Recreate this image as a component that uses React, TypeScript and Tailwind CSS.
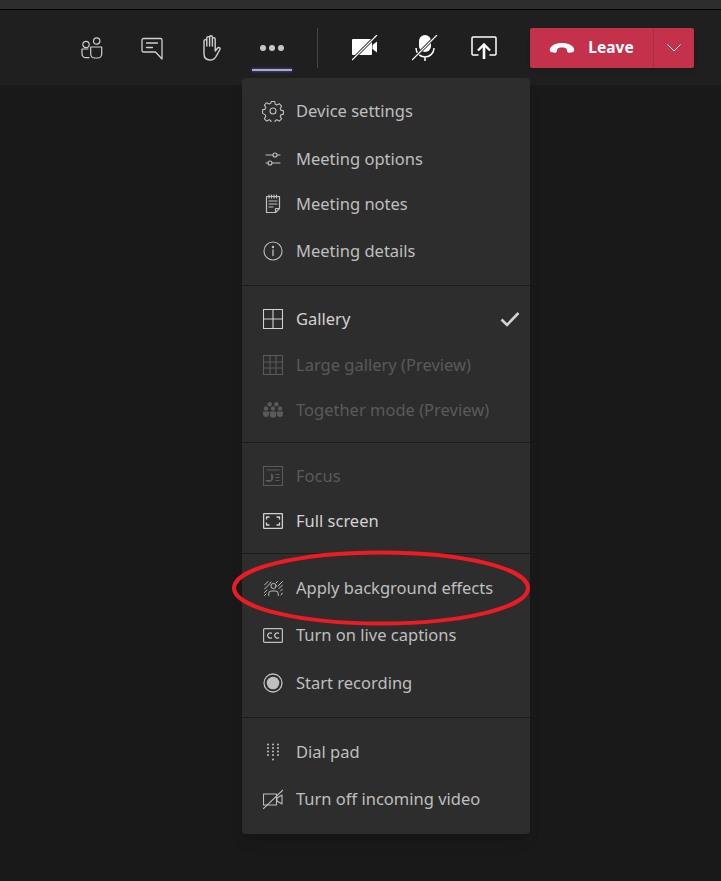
import React from 'react';

const line = { fill: 'none', stroke: 'currentColor', strokeWidth: 1.1, strokeLinecap: 'round', strokeLinejoin: 'round' } as const;

const PeopleIcon = () => (
  <svg width="24" height="24" viewBox="0 0 24 24" {...line} strokeWidth={1.2}>
    <circle cx="6" cy="8.500" r="3.200" />
    <circle cx="16.700" cy="5" r="3.200" />
    <path d="M10.700 11h11v7a4 4 0 0 1-4 4h-3a4 4 0 0 1-4-4z" />
    <path d="M8 13H2v5a3.700 3.700 0 0 0 3.700 3.700H9" />
  </svg>
);

const ChatIcon = () => (
  <svg width="22" height="24" viewBox="0 0 22 24" {...line} strokeWidth={1.3}>
    <path d="M2.500 2.500h17a1.500 1.500 0 0 1 1.500 1.500v19l-6.500-7H2.500A1.500 1.500 0 0 1 1 14.500V4a1.500 1.500 0 0 1 1.500-1.500z" />
    <path d="M5.500 7h11M5.500 11.500h6" />
  </svg>
);

const HandIcon = () => (
  <svg width="22" height="26" viewBox="0 0 22 26" {...line} strokeWidth={1.4}>
    <path d="M3 13V6a1.400 1.400 0 0 1 2.800 0v5V3a1.400 1.400 0 0 1 2.800 0v8V2.200a1.400 1.400 0 0 1 2.800 0V11V4a1.400 1.400 0 0 1 2.800 0V16l2.200-2.800c1.200-1.500 3.400-.2 2.500 1.300l-3.700 6.700C14 23.500 12.500 25 9 25 5 25 3 22.500 3 19z" />
  </svg>
);

const VideoOffIcon = () => (
  <svg width="28" height="26" viewBox="0 0 28 26">
    <path d="M1 4h18a1 1 0 0 1 1 1v14a1 1 0 0 1-1 1H1a1 1 0 0 1-1-1V5a1 1 0 0 1 1-1z" fill="currentColor" />
    <path d="M20.500 10l4.500-3.500v11L20.500 14z" fill="currentColor" />
    <path d="M0 25L25 0" stroke="#1f1f1f" strokeWidth="3" />
    <path d="M0 25L25 0" stroke="currentColor" strokeWidth="1.200" />
  </svg>
);

const MicOffIcon = () => (
  <svg width="26" height="26" viewBox="0 0 26 26" fill="none">
    <rect x="7" y="0" width="12" height="17" rx="6" fill="currentColor" />
    <path d="M4 13a9 9 0 0 0 18 0M13 22v4" stroke="currentColor" strokeWidth="1.500" />
    <path d="M0 25L25 0" stroke="#1f1f1f" strokeWidth="3" />
    <path d="M0 25L25 0" stroke="currentColor" strokeWidth="1.200" />
  </svg>
);

const ShareIcon = () => (
  <svg width="26" height="24" viewBox="0 0 26 24" fill="none" stroke="currentColor" strokeWidth="1.500">
    <path d="M7.500 19H2a1 1 0 0 1-1-1V2a1 1 0 0 1 1-1h22a1 1 0 0 1 1 1v16a1 1 0 0 1-1 1h-5.500" />
    <path d="M13 23V10" strokeWidth="2.600" />
    <path d="M7 14.500L13 8.500l6 6" strokeWidth="2.300" />
  </svg>
);

const HangUpIcon = () => (
  <svg width="26" height="12" viewBox="0 0 26 12" fill="currentColor">
    <path d="M1 6.500C3 2.500 8 1 13 1s10 1.500 12 5.500c.5 1.300.2 3-1 3.600-1.300.6-4 .9-5 .4-1.200-.6-1-3-1.500-3.800C16.800 5.800 15 5.500 13 5.500s-3.800.3-4.500 1.200C8 7.500 8.200 9.900 7 10.500c-1 .5-3.700.2-5-.4-1.200-.6-1.500-2.300-1-3.600z" />
  </svg>
);

const GearIcon = () => (
  <svg width="22" height="22" viewBox="0 0 22 22" {...line}>
    <circle cx="11" cy="11" r="3" />
    <path d="M9.300 1.500h3.400l.6 2.800 1.500.7 2.500-1.300 2.300 2.400-1.400 2.400.6 1.600 2.700.8v3.200l-2.700.8-.6 1.500 1.400 2.400-2.300 2.300-2.500-1.300-1.500.7-.6 2.400H9.300l-.6-2.400-1.500-.7-2.500 1.300-2.300-2.300 1.400-2.400-.6-1.500L.5 13.100V9.900l2.700-.8.600-1.600-1.400-2.400 2.300-2.400 2.500 1.300 1.500-.7z" />
  </svg>
);

const SlidersIcon = () => (
  <svg width="16" height="14" viewBox="0 0 16 14" {...line}>
    <circle cx="10" cy="3" r="2" />
    <circle cx="5" cy="11" r="2" />
    <path d="M1 3h7M12 3h3M1 11h2M7 11h8" />
  </svg>
);

const NotesIcon = () => (
  <svg width="16" height="20" viewBox="0 0 16 20" {...line} strokeWidth={1.2}>
    <path d="M1.500 2.500h13v12l-4 4h-9z" />
    <path d="M10.500 18.500v-4h4M4 1v3M6.500 1v3M9 1v3M11.500 1v3M4 7h8M4 10h8M4 13h4" />
  </svg>
);

const InfoIcon = () => (
  <svg width="20" height="20" viewBox="0 0 20 20" {...line}>
    <circle cx="10" cy="10" r="9" />
    <path d="M10 9v5.500" strokeWidth="1.300" />
    <circle cx="10" cy="6" r=".7" fill="currentColor" />
  </svg>
);

const GalleryIcon = () => (
  <svg width="20" height="20" viewBox="0 0 20 20" {...line} strokeLinecap="butt">
    <rect x=".5" y=".5" width="19" height="19" />
    <path d="M10 1v18M1 10h18" />
  </svg>
);

const LargeGalleryIcon = () => (
  <svg width="20" height="20" viewBox="0 0 20 20" {...line} strokeLinecap="butt">
    <rect x=".5" y=".5" width="19" height="19" />
    <path d="M7 1v18M13 1v18M1 7h18M1 13h18" />
  </svg>
);

const TogetherIcon = () => (
  <svg width="20" height="16" viewBox="0 0 20 16" fill="currentColor">
    <circle cx="6.700" cy="2.200" r="2.200" />
    <circle cx="13.300" cy="2.200" r="2.200" />
    <circle cx="3" cy="6.500" r="2.200" />
    <circle cx="10" cy="6.500" r="2.200" />
    <circle cx="17" cy="6.500" r="2.200" />
    <path d="M0 9.500h6v2.500a3 3 0 0 1-6 0zM6.800 9.500h6.400v3a3.200 3.200 0 0 1-6.400 0zM14 9.500h6v2.500a3 3 0 0 1-6 0z" />
  </svg>
);

const FocusIcon = () => (
  <svg width="20" height="20" viewBox="0 0 20 20" {...line} strokeLinecap="butt">
    <rect x=".5" y=".5" width="19" height="19" />
    <path d="M3.500 4h13M12.500 8.500h4M12.500 11.500h4M12.500 14.500h4" />
    <path d="M8.500 8v6.500H3a3.500 3.500 0 0 0 5.500-6.500z" fill="currentColor" />
  </svg>
);

const FullScreenIcon = () => (
  <svg width="20" height="16" viewBox="0 0 20 16" {...line} strokeLinecap="butt" strokeWidth={1.3}>
    <rect x=".6" y=".6" width="18.800" height="14.800" rx="1" />
    <path d="M6.500 4H3.500v2.500M13.500 4h3v2.500M3.500 9.500V12h3M16.500 9.500V12h-3" />
  </svg>
);

const BackgroundIcon = () => (
  <svg width="19" height="15" viewBox="0 0 19 15" {...line} strokeWidth={1}>
    <circle cx="9.500" cy="5" r="2.600" />
    <path d="M4.800 14.500v-2a2.500 2.500 0 0 1 2.500-2.500h4.400a2.500 2.500 0 0 1 2.500 2.500v2" />
    <path d="M.5 4l3.500-3.500M.5 8L6 2.500M7 1l-1 1M13.500.5L12 2M18.500.5L14 5M18.500 4L15 7.500M.5 11.500L3 9M18.500 8l-2 2M18.500 12l-1.500 2M.5 14.500L2 13" />
  </svg>
);

const CaptionsIcon = () => (
  <svg width="20" height="15" viewBox="0 0 20 15" {...line} strokeLinecap="butt" strokeWidth={1.2}>
    <rect x=".6" y=".6" width="18.800" height="13.800" rx="1" />
    <path d="M9 5.500a2.600 2.600 0 1 0 0 4M16 5.500a2.600 2.600 0 1 0 0 4" />
  </svg>
);

const RecordIcon = () => (
  <svg width="20" height="20" viewBox="0 0 20 20">
    <circle cx="10" cy="10" r="9" fill="none" stroke="currentColor" strokeWidth="1.300" />
    <circle cx="10" cy="10" r="6.300" fill="currentColor" />
  </svg>
);

const DialPadIcon = () => (
  <svg width="14" height="18" viewBox="0 0 14 18" fill="currentColor">
    {[1.500, 5, 8.500, 12].map((y) =>
      [2, 7, 12].map((x) => <circle key={`${x}-${y}`} cx={x} cy={y} r="1" />)
    )}
    <circle cx="7" cy="16.500" r="1" />
  </svg>
);

const IncomingOffIcon = () => (
  <svg width="20" height="20" viewBox="0 0 20 20" {...line} strokeLinecap="butt">
    <path d="M.5 5h13v11H.5zM14 9l5-3v9l-5-3z" />
    <path d="M0 20L20 1" />
  </svg>
);

interface MenuItem {
  label: string;
  icon: React.ReactNode;
  nudge: string;
  tone: string;
  checked?: boolean;
}

const normal = 'text-[#bfbfbf]';
const bright = 'text-[#d2d2d2]';
const muted = 'text-[#5a5a5a]';

const sections: { gap: string; items: MenuItem[] }[] = [
  {
    gap: 'pt-[10px] pb-[11px]',
    items: [
      { label: 'Device settings', icon: <GearIcon />, nudge: 'mt-0', tone: normal },
      { label: 'Meeting options', icon: <SlidersIcon />, nudge: 'mt-[2px]', tone: normal },
      { label: 'Meeting notes', icon: <NotesIcon />, nudge: 'mt-[-1px]', tone: normal },
      { label: 'Meeting details', icon: <InfoIcon />, nudge: 'mt-[1px]', tone: normal },
    ],
  },
  {
    gap: 'pt-[10px] pb-[9px]',
    items: [
      { label: 'Gallery', icon: <GalleryIcon />, nudge: 'mt-0', tone: bright, checked: true },
      { label: 'Large gallery (Preview)', icon: <LargeGalleryIcon />, nudge: 'mt-0', tone: muted },
      { label: 'Together mode (Preview)', icon: <TogetherIcon />, nudge: 'mt-[-1px]', tone: muted },
    ],
  },
  {
    gap: 'pt-[10px] pb-[9px]',
    items: [
      { label: 'Focus', icon: <FocusIcon />, nudge: 'mt-0', tone: muted },
      { label: 'Full screen', icon: <FullScreenIcon />, nudge: 'mt-[-1px]', tone: bright },
    ],
  },
  {
    gap: 'pt-[11px] pb-[11px]',
    items: [
      { label: 'Apply background effects', icon: <BackgroundIcon />, nudge: 'mt-0', tone: normal },
      { label: 'Turn on live captions', icon: <CaptionsIcon />, nudge: 'mt-[1px]', tone: normal },
      { label: 'Start recording', icon: <RecordIcon />, nudge: 'mt-[2px]', tone: normal },
    ],
  },
  {
    gap: 'pt-[11px] pb-[13px]',
    items: [
      { label: 'Dial pad', icon: <DialPadIcon />, nudge: 'mt-0', tone: normal },
      { label: 'Turn off incoming video', icon: <IncomingOffIcon />, nudge: 'mt-[1px]', tone: normal },
    ],
  },
];

const Toolbar: React.FC = () => (
  <div className="h-[75px] bg-[#1f1f1f] flex items-start pl-[62px] pt-[18px] text-[#cfcfcf]">
    <button type="button" className="w-[60px] h-[40px] flex items-center justify-center"><PeopleIcon /></button>
    <button type="button" className="w-[60px] h-[40px] flex items-center justify-center"><ChatIcon /></button>
    <button type="button" className="w-[60px] h-[40px] flex items-center justify-center"><HandIcon /></button>
    <button type="button" className="relative w-[60px] h-[40px] pb-[1px] flex items-center justify-center gap-[3px]">
      <span className="w-[6px] h-[6px] rounded-full bg-[#c8c8c8]" />
      <span className="w-[6px] h-[6px] rounded-full bg-[#c8c8c8]" />
      <span className="w-[6px] h-[6px] rounded-full bg-[#c8c8c8]" />
      <span className="absolute left-[10px] bottom-[-3px] w-[40px] h-[2px] bg-[#a6a7dc] shadow-[0_0_3px_#6264a7]" />
    </button>
    <div className="ml-[15px] w-px h-[40px] bg-[#484848]" />
    <div className="ml-[18px] flex text-white">
      <button type="button" className="w-[59px] h-[40px] flex items-center justify-center"><VideoOffIcon /></button>
      <button type="button" className="w-[59px] h-[40px] flex items-center justify-center"><MicOffIcon /></button>
      <button type="button" className="w-[59px] h-[40px] flex items-center justify-center"><ShareIcon /></button>
    </div>
    <div className="ml-[17px] w-[164px] h-[40px] flex rounded-[2px] bg-[#c4314b] text-white shadow-md">
      <button type="button" className="w-[124px] flex items-center justify-center gap-[13px] border-r border-[#ab2c43] font-bold text-[15.5px]">
        <HangUpIcon />
        <span>Leave</span>
      </button>
      <button type="button" className="flex-1 flex items-center justify-center">
        <svg width="14" height="8" viewBox="0 0 14 8" fill="none" stroke="currentColor" strokeWidth="1"><path d="M.5 .5L7 7l6.500-6.500" /></svg>
      </button>
    </div>
  </div>
);

const Menu: React.FC = () => (
  <div className="absolute left-[242px] top-[78px] w-[288px] h-[756px] rounded-[4px] bg-[#2d2d2d] shadow-lg divide-y divide-[#1b1b1b]">
    {sections.map((section) => (
      <div key={section.items[0].label} className={section.gap}>
        {section.items.map((item) => (
          <div
            key={item.label}
            className={`h-[46px] pl-[20px] pr-[10px] flex items-center text-[16.5px] ${item.nudge} ${item.tone}`}
          >
            <span className="w-[22px] h-[22px] mr-[12px] flex items-center justify-center shrink-0">{item.icon}</span>
            <span className="flex-1">{item.label}</span>
            {item.checked && (
              <svg width="20" height="16" viewBox="0 0 20 16" fill="none" stroke="currentColor" strokeWidth="2.600"><path d="M1.500 8.500L7 14 18.500 2" /></svg>
            )}
          </div>
        ))}
      </div>
    ))}
  </div>
);

export default function App() {
  return (
    <div className="relative w-[721px] h-[881px] overflow-hidden bg-[#191919] font-['Noto_Sans','Open_Sans',sans-serif]">
      <div className="h-[9px] bg-[#2d2d2d]" />
      <div className="h-px bg-black" />
      <Toolbar />
      <Menu />
      {/* red annotation drawn over the screenshot */}
      <svg className="absolute left-[230px] top-[548px]" width="302" height="80" viewBox="0 0 302 80" fill="none">
        <ellipse cx="151" cy="40" rx="147" ry="35.500" stroke="#ed1c24" strokeWidth="4" />
      </svg>
    </div>
  );
}
